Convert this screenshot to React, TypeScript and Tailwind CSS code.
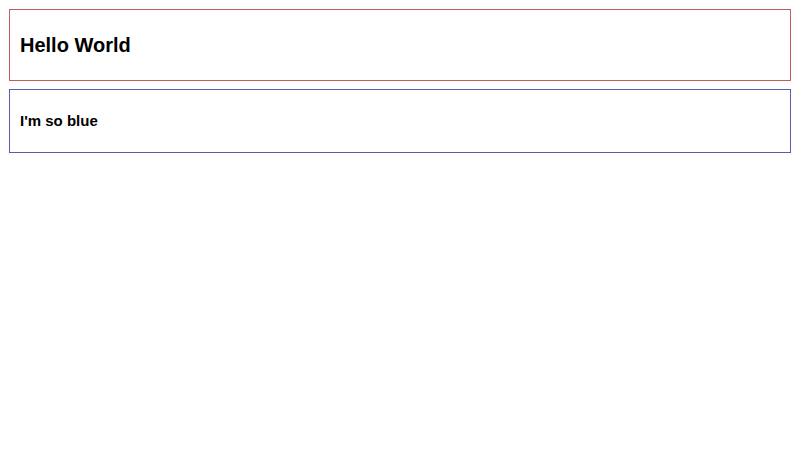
export default function App() {
  return (
    <div className="flex flex-col gap-2 p-[9px] font-['Liberation_Sans',Arial,sans-serif] text-black">
      <div className="flex h-[72px] items-center border border-[#c45c5c] px-[10px]">
        <h1 className="text-[20px] font-bold">Hello World</h1>
      </div>
      <div className="flex h-[64px] items-center border border-[#5c5cac] px-[10px]">
        <h2 className="text-[15px] font-bold">I'm so blue</h2>
      </div>
    </div>
  );
}
